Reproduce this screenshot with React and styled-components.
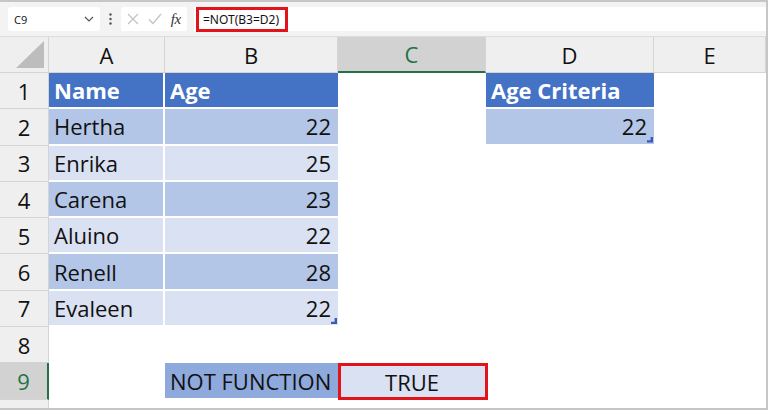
import React from 'react';
import styled, { createGlobalStyle } from 'styled-components';

const GlobalStyle = createGlobalStyle`
  html, body { margin: 0; padding: 0; background: #fff; }
  body { font-family: "Open Sans", "Noto Sans", sans-serif; }
`;

const Frame = styled.div`
  width: 768px;
  height: 410px;
  box-sizing: border-box;
  border-top: 2px solid #c6c6c6;
  border-right: 2px solid #c6c6c6;
  border-bottom: 2px solid #c6c6c6;
  overflow: hidden;
  display: flex;
  flex-direction: column;
  background: #fff;
`;

const FormulaBar = styled.div`
  height: 35px;
  box-sizing: border-box;
  background: #f3f3f3;
  display: flex;
  align-items: center;
  padding: 0 0 0 8px;
  border-bottom: 1px solid #dcdcdc;
`;

const NameBox = styled.div`
  width: 92px;
  height: 24px;
  box-sizing: border-box;
  background: #fff;
  border-radius: 3px;
  display: flex;
  align-items: center;
  justify-content: space-between;
  padding: 0 6px;
  font-family: "Noto Sans", sans-serif;
  font-size: 11px;
  color: #222;
`;

const Dots = styled.div`
  width: 21px;
  display: flex;
  justify-content: center;
`;

const ButtonGroup = styled.div`
  width: 66px;
  height: 24px;
  background: #fff;
  border-radius: 3px;
  display: flex;
  align-items: center;
  justify-content: space-around;
  padding: 0 2px;
  box-sizing: border-box;
`;

const Fx = styled.span`
  font-family: "Liberation Serif", serif;
  font-style: italic;
  font-size: 15px;
  color: #333;
  letter-spacing: -0.5px;
`;

const FormulaInput = styled.div`
  flex: 1;
  margin-left: 7px;
  height: 24px;
  background: #fff;
  display: flex;
  align-items: center;
  padding-left: 2px;
`;

const Highlight = styled.div`
  height: 25px;
  box-sizing: border-box;
  border: 3px solid #e3131b;
  display: flex;
  align-items: center;
  padding: 0 6px 0 4px;
  font-family: "Noto Sans", sans-serif;
  font-size: 12px;
  color: #111;
`;

const Sheet = styled.div`
  display: grid;
  grid-template-columns: 49px 116px 173px 148px 168px 1fr;
  grid-template-rows: 36px repeat(9, 36.3px) 1fr;
  flex: 1;
  font-size: 22px;
  color: #111;
`;

const Corner = styled.div`
  background: #efefef;
  border-right: 1px solid #d4d4d4;
  border-bottom: 1px solid #d4d4d4;
  position: relative;
`;

const ColHead = styled.div`
  background: ${p => (p.$active ? '#d2d2d2' : '#efefef')};
  color: ${p => (p.$active ? '#217346' : '#111')};
  border-right: 1px solid #d4d4d4;
  border-bottom: ${p => (p.$active ? '2px solid #217346' : '1px solid #d4d4d4')};
  display: flex;
  align-items: center;
  justify-content: center;
  box-sizing: border-box;
`;

const RowHead = styled.div`
  background: ${p => (p.$active ? '#d2d2d2' : '#efefef')};
  color: ${p => (p.$active ? '#217346' : '#111')};
  border-right: ${p => (p.$active ? '2px solid #217346' : '1px solid #d4d4d4')};
  border-bottom: 1px solid #d4d4d4;
  display: flex;
  align-items: center;
  justify-content: center;
  box-sizing: border-box;
`;

const Cell = styled.div`
  position: relative;
  background: ${p => p.$bg || '#fff'};
  color: ${p => (p.$head ? '#fff' : '#111')};
  font-weight: ${p => (p.$head ? 700 : 400)};
  display: flex;
  align-items: center;
  justify-content: ${p => p.$align || 'flex-start'};
  padding: 0 7px 0 5px;
  box-sizing: border-box;
  white-space: nowrap;
  overflow: hidden;
  border-right: ${p => (p.$bg && !p.$last ? '2px solid #fff' : 'none')};
  border-bottom: ${p => (p.$bg ? '2px solid #fff' : 'none')};
`;

const Selected = styled(Cell)`
  border: 3px solid #e3131b;
  justify-content: center;
  margin-right: -2px;
  z-index: 1;
`;

const Handle = styled.span`
  position: absolute;
  right: 1px;
  bottom: 1px;
  width: 6px;
  height: 6px;
  background: #3a5bb5;
  clip-path: polygon(60% 0, 100% 0, 100% 100%, 0 100%, 0 60%, 60% 60%);
`;

const BlankRow = styled.div`
  grid-column: 1 / -1;
  display: grid;
  grid-template-columns: 49px 1fr;
`;

const Gutter = styled.div`
  background: #efefef;
  border-right: 1px solid #d4d4d4;
`;

const HEAD = '#4472c4';
const DARK = '#b4c6e7';
const LIGHT = '#d9e1f2';
const MID = '#8ea9db';

const people = [
  ['Hertha', 22],
  ['Enrika', 25],
  ['Carena', 23],
  ['Aluino', 22],
  ['Renell', 28],
  ['Evaleen', 22],
];

const Chevron = () => (
  <svg width="10" height="6" viewBox="0 0 10 6">
    <path d="M1 1l4 4 4-4" fill="none" stroke="#555" strokeWidth="1.2" />
  </svg>
);

const VDots = () => (
  <svg width="3" height="12" viewBox="0 0 3 12">
    <circle cx="1.5" cy="1.5" r="1.2" fill="#555" />
    <circle cx="1.5" cy="6" r="1.2" fill="#555" />
    <circle cx="1.5" cy="10.5" r="1.2" fill="#555" />
  </svg>
);

const Cross = () => (
  <svg width="12" height="12" viewBox="0 0 12 12">
    <path d="M1 1l10 10M11 1L1 11" stroke="#c2c2c2" strokeWidth="1.2" />
  </svg>
);

const Check = () => (
  <svg width="14" height="12" viewBox="0 0 14 12">
    <path d="M1 6.5l4 4L13 1" fill="none" stroke="#c2c2c2" strokeWidth="1.2" />
  </svg>
);

const CornerTriangle = () => (
  <svg width="28" height="27" viewBox="0 0 28 27" style={{ position: 'absolute', right: 4, bottom: 4 }}>
    <polygon points="28,0 28,27 0,27" fill="#bdbdbd" />
  </svg>
);

export default function App() {
  const cols = ['A', 'B', 'C', 'D', 'E'];
  const blank = n => Array.from({ length: n }, (_, i) => <Cell key={i} />);

  return (
    <>
      <GlobalStyle />
      <Frame>
        <FormulaBar>
          <NameBox>
            <span>C9</span>
            <Chevron />
          </NameBox>
          <Dots><VDots /></Dots>
          <ButtonGroup>
            <Cross />
            <Check />
            <Fx>fx</Fx>
          </ButtonGroup>
          <FormulaInput>
            <Highlight>=NOT(B3=D2)</Highlight>
          </FormulaInput>
        </FormulaBar>

        <Sheet>
          <Corner><CornerTriangle /></Corner>
          {cols.map(c => (
            <ColHead key={c} $active={c === 'C'}>{c}</ColHead>
          ))}

          <RowHead>1</RowHead>
          <Cell $bg={HEAD} $head>Name</Cell>
          <Cell $bg={HEAD} $head $last>Age</Cell>
          <Cell />
          <Cell $bg={HEAD} $head $last>Age Criteria</Cell>
          <Cell />

          {people.map(([name, age], i) => {
            const bg = i % 2 === 0 ? DARK : LIGHT;
            const row = i + 2;
            return (
              <React.Fragment key={name}>
                <RowHead>{row}</RowHead>
                <Cell $bg={bg}>{name}</Cell>
                <Cell $bg={bg} $align="flex-end" $last>
                  {age}
                  {row === 7 && <Handle />}
                </Cell>
                <Cell />
                {row === 2 ? (
                  <Cell $bg={DARK} $align="flex-end" $last>
                    22
                    <Handle />
                  </Cell>
                ) : (
                  <Cell />
                )}
                <Cell />
              </React.Fragment>
            );
          })}

          <RowHead>8</RowHead>
          {blank(5)}

          <RowHead $active>9</RowHead>
          <Cell />
          <Cell $bg={MID} $last>NOT FUNCTION</Cell>
          <Selected $bg={LIGHT}>TRUE</Selected>
          <Cell />
          <Cell />

          <BlankRow>
            <Gutter />
            <div />
          </BlankRow>
        </Sheet>
      </Frame>
    </>
  );
}
